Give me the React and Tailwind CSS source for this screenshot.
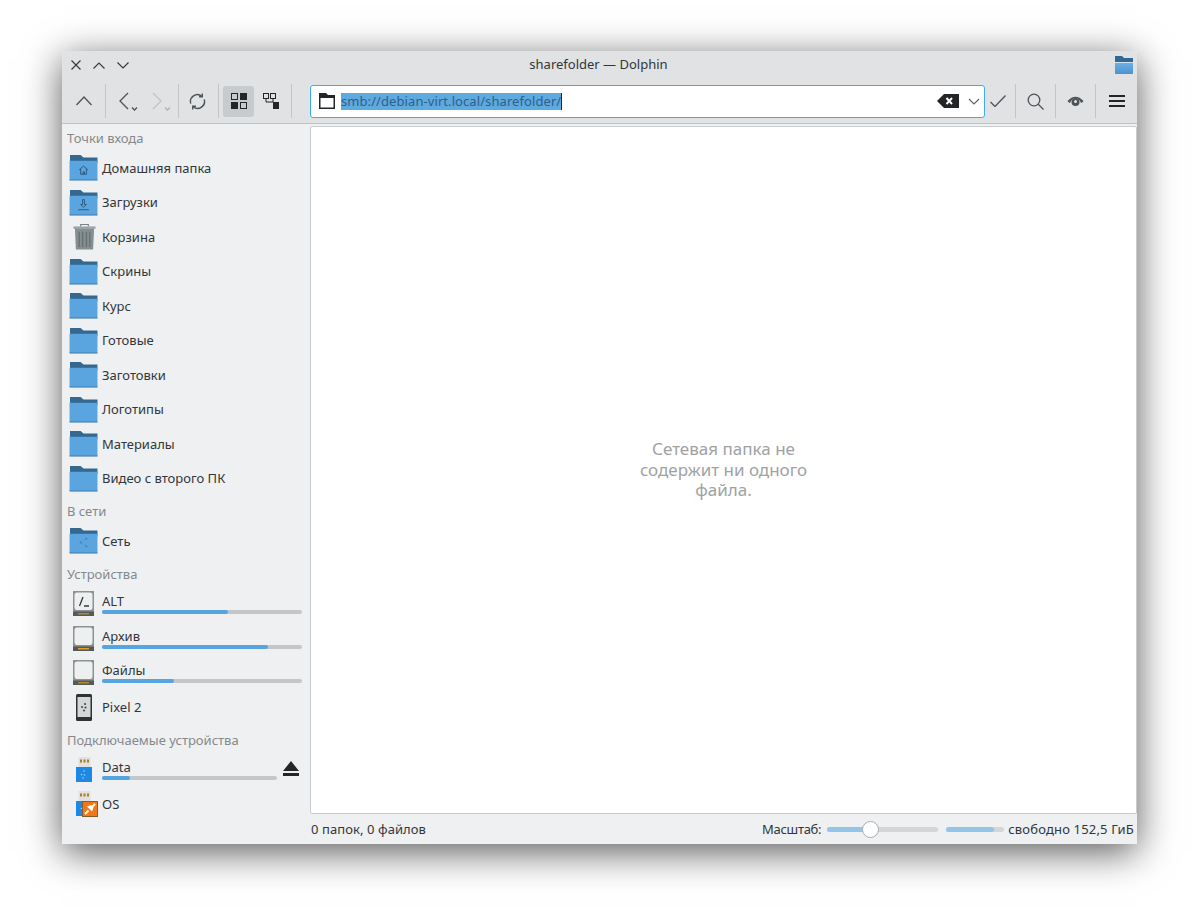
import React from 'react';

const font = { fontFamily: '"Noto Sans", sans-serif' };

function Sep() {
    return <div className="w-px h-[34px] bg-[#c3c6c9] shrink-0" />;
}

function FolderIcon({ children }) {
    return (
        <svg width="29" height="26" viewBox="0 0 30 27" className="shrink-0">
            <path d="M1 0h11l3 2.500h14.500v6h-28.500z" fill="#34688f" />
            <rect x="0.500" y="6" width="29" height="20" fill="#5aa5e0" />
            <rect x="0.500" y="25.500" width="29" height="1" fill="#3c78a8" />
            {children}
        </svg>
    );
}

function HomeGlyph() {
    return (
        <g fill="none" stroke="#2c5a7e" strokeWidth="1">
            <path d="M10.500 15.500l4.500-4 4.500 4" />
            <path d="M12 14.500v5.500h6v-5.500" />
            <path d="M14.500 20v-2.500h1.500v2.500" />
        </g>
    );
}

function DownloadGlyph() {
    return (
        <g fill="none" stroke="#2c5a7e" strokeWidth="1">
            <path d="M14 10h2v5h2l-3 3-3-3h2z" />
            <path d="M9.500 20.500h11" />
        </g>
    );
}

function NetGlyph() {
    return (
        <g fill="#3f7fb0">
            <circle cx="12" cy="15" r="1" />
            <circle cx="18" cy="11" r="1" />
            <circle cx="18" cy="19" r="1" />
            <path d="M12 15l6-4M12 15l6 4" stroke="#3f7fb0" strokeWidth="0.500" strokeDasharray="1 1" />
        </g>
    );
}

function TrashIcon() {
    return (
        <svg width="23" height="26" viewBox="0 0 24 27" className="shrink-0">
            <path d="M8 2.500v-2h8v2" fill="none" stroke="#7a8486" strokeWidth="1.200" />
            <rect x="0.500" y="2.500" width="23" height="2.500" fill="#9aa2a4" />
            <path d="M2 5h20l-1 21.500h-18z" fill="#858f91" />
            <path d="M6.500 8v16M10 8v16M14 8v16M17.500 8v16" stroke="#687274" strokeWidth="1.500" />
        </svg>
    );
}

function DriveIcon({ slash, slot }) {
    return (
        <svg width="21" height="25" viewBox="0 0 21 25" className="shrink-0">
            <rect width="21" height="25" fill="#8d9294" />
            <rect y="20.500" width="21" height="4.500" fill="#54595b" />
            <rect x="5" y="22" width="11" height="1.500" fill={slot} />
            <path d="M4 1.500h13q2.500 0 2.500 2.500v12q0 3-2.500 3h-13q-2.500 0-2.500-3v-12q0-2.500 2.500-2.500z" fill="#eef0f0" />
            {slash && <path d="M6.500 15l3.500-9M11 15h5" stroke="#33383a" strokeWidth="1.300" fill="none" />}
        </svg>
    );
}

function PhoneIcon() {
    return (
        <svg width="16" height="27" viewBox="0 0 16 27" className="shrink-0">
            <rect width="16" height="27" rx="1.500" fill="#2e3234" />
            <rect x="1.500" y="3" width="13" height="20" fill="#d4d7d8" />
            <g fill="#3c4143">
                <circle cx="9" cy="10" r="1" />
                <circle cx="6" cy="13" r="1" />
                <circle cx="9.500" cy="13.500" r="1" />
                <circle cx="8" cy="16.500" r="1" />
            </g>
        </svg>
    );
}

function UsbIcon({ badge }) {
    return (
        <svg width="24" height="26" viewBox="0 0 24 26" className="shrink-0">
            <rect x="2.500" y="0" width="12" height="10" fill="#dfe1e2" />
            <path d="M4 2.500h2v3h-2zM7.500 2.500h2v3h-2zM11 2.500h2v3h-2z" fill="#b07c1e" />
            <rect x="0" y="10" width="16" height="15" fill="#1e88e5" />
            <g fill="#a8d4f7">
                <circle cx="8" cy="14" r="0.800" />
                <circle cx="5.500" cy="17.500" r="0.800" />
                <circle cx="8.500" cy="18" r="0.800" />
                <circle cx="7" cy="21" r="0.800" />
            </g>
            {badge && (
                <g>
                    <rect x="6.500" y="10.500" width="15" height="15" fill="#f07818" stroke="#8a5a2c" />
                    <path d="M9 23l3.500-3.500M19 13l-3.500 3.500" stroke="#fff" strokeWidth="2" />
                    <path d="M11 15.500l5 5 1.500-4-2.500-2.500z" fill="#fff" />
                </g>
            )}
        </svg>
    );
}

function Heading({ children, className }) {
    return (
        <div className={`pl-[5px] flex items-center text-[13px] text-[#85898c] ${className}`}>
            {children}
        </div>
    );
}

function Place({ icon, label, indent }) {
    return (
        <div className="h-[34.5px] flex items-center">
            <div className={`w-[40px] shrink-0 flex ${indent || 'pl-[7px]'}`}>{icon}</div>
            <span className="text-[13px] text-[#31363b]">{label}</span>
        </div>
    );
}

function Device({ icon, label, fill, eject, indent }) {
    return (
        <div className="h-[34.5px] flex items-center">
            <div className={`w-[40px] shrink-0 flex ${indent || 'pl-[11px]'}`}>{icon}</div>
            <div className="flex-1 pt-px min-w-0">
                <div className="text-[13px] leading-[15px] text-[#31363b]">{label}</div>
                <div className="h-[4px] mt-[1px] bg-[#c4c7c9] rounded-[2px]">
                    <div className="h-full bg-[#56a5e0] rounded-[2px]" style={{ width: `${fill}%` }} />
                </div>
            </div>
            {eject && (
                <svg width="16" height="15" viewBox="0 0 16 15" className="ml-[6px] mr-[3px] shrink-0 mb-[2px]">
                    <path d="M8 0l8 10h-16z" fill="#232629" />
                    <rect y="12" width="16" height="3" fill="#232629" />
                </svg>
            )}
        </div>
    );
}

function Sidebar() {
    return (
        <div className="w-[248px] shrink-0 pr-[8px]">
            <Heading className="h-[27px] pt-[2px]">Точки входа</Heading>
            <Place icon={<FolderIcon><HomeGlyph /></FolderIcon>} label="Домашняя папка" />
            <Place icon={<FolderIcon><DownloadGlyph /></FolderIcon>} label="Загрузки" />
            <Place icon={<TrashIcon />} label="Корзина" indent="pl-[11px]" />
            <Place icon={<FolderIcon />} label="Скрины" />
            <Place icon={<FolderIcon />} label="Курс" />
            <Place icon={<FolderIcon />} label="Готовые" />
            <Place icon={<FolderIcon />} label="Заготовки" />
            <Place icon={<FolderIcon />} label="Логотипы" />
            <Place icon={<FolderIcon />} label="Материалы" />
            <Place icon={<FolderIcon />} label="Видео с второго ПК" />
            <Heading className="h-[28px] pt-[4px]">В сети</Heading>
            <Place icon={<FolderIcon><NetGlyph /></FolderIcon>} label="Сеть" />
            <Heading className="h-[28px] pt-[5px]">Устройства</Heading>
            <Device icon={<DriveIcon slash slot="#b8862a" />} label="ALT" fill={63} />
            <Device icon={<DriveIcon slot="#e0a020" />} label="Архив" fill={83} />
            <Device icon={<DriveIcon slot="#b8862a" />} label="Файлы" fill={36} />
            <Place icon={<PhoneIcon />} label="Pixel 2" indent="pl-[14px]" />
            <Heading className="h-[28px] pt-[5px]">Подключаемые устройства</Heading>
            <Device icon={<UsbIcon />} label="Data" fill={16} eject indent="pl-[14px]" />
            <Place icon={<UsbIcon badge />} label="OS" indent="pl-[14px]" />
        </div>
    );
}

function Toolbar() {
    const stroke = { fill: 'none', stroke: '#4d5257', strokeWidth: 1.300 };
    return (
        <div className="h-[46px] flex items-center border-b border-[#bfc2c5] pt-[1px]">
            <div className="w-[43px] flex justify-center">
                <svg width="16" height="10" viewBox="0 0 16 10"><path d="M0.500 9l7.500-8 7.500 8" {...stroke} /></svg>
            </div>
            <Sep />
            <div className="w-[36px] flex justify-center relative">
                <svg width="10" height="18" viewBox="0 0 10 18"><path d="M9 1l-8 8 8 8" {...stroke} /></svg>
                <svg width="7" height="4" viewBox="0 0 7 4" className="absolute left-[25px] top-[15px]"><path d="M1 0.500l2.500 2.500 2.500-2.500" {...stroke} /></svg>
            </div>
            <div className="w-[36px] flex justify-center pr-[6px] relative">
                <svg width="10" height="18" viewBox="0 0 10 18"><path d="M1 1l8 8-8 8" fill="none" stroke="#c0c3c6" strokeWidth="1.300" /></svg>
                <svg width="7" height="4" viewBox="0 0 7 4" className="absolute left-[22px] top-[15px]"><path d="M1 0.500l2.500 2.500 2.500-2.500" fill="none" stroke="#b0b3b6" strokeWidth="1.300" /></svg>
            </div>
            <Sep />
            <div className="w-[39px] flex justify-center pr-[2px]">
                <svg width="17" height="17" viewBox="0 0 16 16">
                    <path d="M1.700 10a6.500 6.500 0 0 1 10.300-7M14.300 6a6.500 6.500 0 0 1-10.300 7" {...stroke} />
                    <path d="M12.500 0.500v3h-3M3.500 15.500v-3h3" {...stroke} />
                </svg>
            </div>
            <Sep />
            <div className="ml-[4px] w-[31px] h-[31px] rounded-[3px] bg-[#c7cbce] flex items-center justify-center">
                <svg width="16" height="16" viewBox="0 0 16 16">
                    <rect x="0.500" y="0.500" width="6" height="6" fill="none" stroke="#232629" />
                    <rect x="9" y="0" width="7" height="7" fill="#232629" />
                    <rect x="0" y="9" width="7" height="7" fill="#232629" />
                    <rect x="9.500" y="9.500" width="6" height="6" fill="none" stroke="#232629" />
                </svg>
            </div>
            <div className="w-[37px] flex justify-center pr-[3px]">
                <svg width="16" height="16" viewBox="0 0 16 16">
                    <rect x="0.500" y="0.500" width="5" height="5" fill="none" stroke="#232629" />
                    <rect x="7.500" y="0.500" width="5" height="5" fill="none" stroke="#232629" />
                    <rect x="10" y="9" width="6" height="7" fill="#232629" />
                    <path d="M3 5.500v3.500h7M10 5.500v3.500" fill="none" stroke="#232629" />
                </svg>
            </div>
            <Sep />
            <div className="ml-[18px] w-[675px] h-[33px] bg-white border border-[#3daee9] rounded-[3px] flex items-center pl-[8px]">
                <svg width="16" height="16" viewBox="0 0 16 16" className="shrink-0">
                    <path d="M0 0h7l2 2h7v14h-16z" fill="#232629" />
                    <rect x="1.500" y="5" width="13" height="9.500" fill="#fff" />
                </svg>
                <span className="ml-[6px] h-[17px] leading-[17px] text-[13px] tracking-[0.08px] bg-[#5ea9de] text-[#2f5f8a] border-r border-[#232629]">smb://debian-virt.local/sharefolder/</span>
                <svg width="22" height="14" viewBox="0 0 22 14" className="ml-auto shrink-0">
                    <path d="M7 0h15v14h-15l-7-7z" fill="#232629" />
                    <path d="M9.500 4l5.500 6M15 4l-5.500 6" stroke="#fff" strokeWidth="2" />
                </svg>
                <svg width="12" height="7" viewBox="0 0 12 7" className="ml-[9px] mr-[4px] shrink-0"><path d="M1 1l5 5 5-5" fill="none" stroke="#5c6166" strokeWidth="1.100" /></svg>
            </div>
            <div className="w-[30px] flex justify-center pr-[4px]">
                <svg width="16" height="12" viewBox="0 0 16 12"><path d="M0.500 7l4.500 4.500 10.500-11" {...stroke} /></svg>
            </div>
            <Sep />
            <div className="w-[39px] flex justify-center">
                <svg width="17" height="17" viewBox="0 0 17 17">
                    <circle cx="7" cy="7" r="5.800" {...stroke} />
                    <path d="M11 11l5.500 5.500" {...stroke} />
                </svg>
            </div>
            <Sep />
            <div className="w-[39px] flex justify-center">
                <svg width="17" height="11" viewBox="0 0 17 11">
                    <path d="M0.500 5q8-8.500 16 0-1.500 2-2.500 2-2-5-5.500-5t-5.500 5q-1 0-2.500-2z" fill="#4d5257" />
                    <circle cx="8.500" cy="6" r="4" fill="#4d5257" />
                    <circle cx="8.500" cy="5.500" r="1.500" fill="#e0e2e4" />
                </svg>
            </div>
            <Sep />
            <div className="w-[41px] flex justify-center">
                <svg width="16" height="12" viewBox="0 0 16 12">
                    <rect width="16" height="2" fill="#232629" />
                    <rect y="5" width="16" height="2" fill="#232629" />
                    <rect y="10" width="16" height="2" fill="#232629" />
                </svg>
            </div>
        </div>
    );
}

function StatusBar() {
    return (
        <div className="h-[30px] flex items-center text-[13px] text-[#31363b] pl-[1px] pt-[1px]">
            <span className="tracking-[0.08px]">0 папок, 0 файлов</span>
            <span className="ml-auto tracking-[-0.3px]">Масштаб:</span>
            <div className="ml-[6px] w-[111px] h-[5px] rounded-full bg-[#d3d6d8] relative">
                <div className="w-[44px] h-full rounded-l-full bg-[#93c5e8]" />
                <div className="absolute left-[35px] -top-[6px] w-[17px] h-[17px] rounded-full bg-white border border-[#a9acae]" />
            </div>
            <div className="ml-[8px] w-[58px] h-[5px] rounded-full bg-[#d3d6d8]">
                <div className="w-[48px] h-full rounded-full bg-[#93c5e8]" />
            </div>
            <span className="ml-[4px] mr-[3px] tracking-[0.17px]">свободно 152,5 ГиБ</span>
        </div>
    );
}

export default function App() {
    return (
        <div className="w-[1200px] h-[918px] bg-white pt-[51px] pl-[62px] overflow-hidden" style={font}>
            <div className="w-[1075px] h-[793px] flex flex-col bg-[#eff0f1] shadow-[0_8px_36px_rgba(0,0,0,0.65)]">
                <div className="bg-[#e0e2e4] rounded-t-[3px]">
                    <div className="h-[27px] flex items-center pt-[1px]">
                        <div className="flex items-center pl-[9px] gap-[12px]">
                            <svg width="10" height="10" viewBox="0 0 10 10"><path d="M0.500 0.500l9 9M9.500 0.500l-9 9" fill="none" stroke="#31363b" strokeWidth="1.100" /></svg>
                            <svg width="12" height="7" viewBox="0 0 12 7"><path d="M0.500 6.500l5.500-5.500 5.500 5.500" fill="none" stroke="#31363b" strokeWidth="1.100" /></svg>
                            <svg width="12" height="7" viewBox="0 0 12 7"><path d="M0.500 0.500l5.500 5.500 5.500-5.500" fill="none" stroke="#31363b" strokeWidth="1.100" /></svg>
                        </div>
                        <div className="flex-1 text-center text-[13px] text-[#31363b] pr-[47px]">sharefolder — Dolphin</div>
                        <svg width="18" height="18" viewBox="0 0 18 18" className="mr-[4px] shrink-0">
                            <defs>
                                <linearGradient id="appFolder" x1="0" y1="0" x2="0" y2="1">
                                    <stop offset="0" stopColor="#6eb2e6" />
                                    <stop offset="1" stopColor="#4a94cc" />
                                </linearGradient>
                            </defs>
                            <path d="M0 0h7l2 2h9v5h-18z" fill="#34688f" />
                            <rect y="6" width="18" height="12" fill="url(#appFolder)" />
                            <rect y="6" width="18" height="1" fill="#cfe3f3" />
                        </svg>
                    </div>
                    <Toolbar />
                </div>
                <div className="flex-1 flex min-h-0">
                    <Sidebar />
                    <div className="flex-1 flex flex-col min-w-0 pt-[2px]">
                        <div className="flex-1 bg-white border border-[#c9cccf] rounded-[2px] flex justify-center pt-[312px]">
                            <p className="w-[180px] text-center text-[17px] leading-[20.500px] text-[#a0a2a4]">Сетевая папка не содержит ни одного файла.</p>
                        </div>
                        <StatusBar />
                    </div>
                </div>
            </div>
        </div>
    );
}
